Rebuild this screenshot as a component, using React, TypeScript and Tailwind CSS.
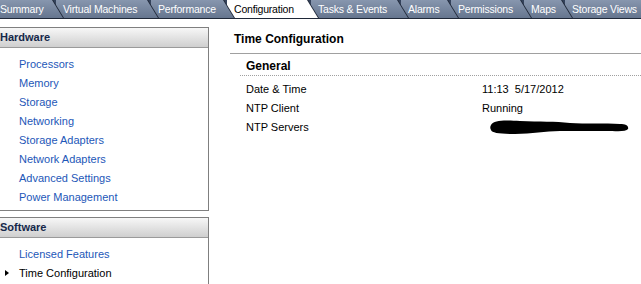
import React from "react";

const tabs = [
  { label: "Summary", w: "w-[71px]" },
  { label: "Virtual Machines", w: "w-[103px]" },
  { label: "Performance", w: "w-[84px]" },
  { label: "Configuration", w: "w-[92px]", active: true },
  { label: "Tasks & Events", w: "w-[98px]" },
  { label: "Alarms", w: "w-[58px]" },
  { label: "Permissions", w: "w-[81px]" },
  { label: "Maps", w: "w-[49px]" },
  { label: "Storage Views", w: "w-[90px]" },
];

const hardware = [
  "Processors",
  "Memory",
  "Storage",
  "Networking",
  "Storage Adapters",
  "Network Adapters",
  "Advanced Settings",
  "Power Management",
];

function Tab({ label, w, active }: { label: string; w: string; active?: boolean }) {
  return (
    <div
      className={`${w} relative -mr-[8px] h-[18px] shrink-0 bg-[#1f2838] [clip-path:polygon(0_0,calc(100%-11px)_0,100%_100%,0_100%)]`}
    >
      <div
        className={`flex h-full items-center pl-[7px] tracking-[-0.2px] [clip-path:polygon(0_0,calc(100%-12px)_0,calc(100%-1px)_100%,0_100%)] ${
          active
            ? "h-[19px] bg-white text-black"
            : "bg-gradient-to-b from-[#8796ae] to-[#66768f] text-white"
        }`}
      >
        {label}
      </div>
    </div>
  );
}

function Section({ title, children }: { title: string; children: React.ReactNode }) {
  return (
    <div className="w-[209px] border-y border-r border-[#7f7f7f] bg-white">
      <div className="flex h-[20px] items-center border-b border-[#9a9a9a] bg-gradient-to-b from-[#f7f7f7] to-[#cfcfcf] font-bold text-[#15284a]">
        {title}
      </div>
      <div className="flex flex-col pt-[7px] pb-[3px]">{children}</div>
    </div>
  );
}

function Link({ children }: { children: React.ReactNode }) {
  return <div className="flex h-[19px] items-center pl-[19px] text-[#1d57b8]">{children}</div>;
}

export default function App() {
  return (
    <div className="h-[284px] w-[641px] overflow-hidden bg-white text-[11px] font-['Liberation_Sans',Tahoma,sans-serif] leading-none">
      <div className="flex h-[19px] items-end border-b border-[#1f2838] bg-gradient-to-b from-[#33415a] to-[#4d5d78] -ml-[7px] text-[10.5px]">
        {tabs.map((t, i) => (
          <div key={t.label} className="flex" style={{ zIndex: 20 - i }}>
            <Tab {...t} />
          </div>
        ))}
      </div>
      <div className="flex">
        <div className="flex flex-col gap-[6px] pt-[8px]">
          <Section title="Hardware">
            {hardware.map((h) => (
              <Link key={h}>{h}</Link>
            ))}
          </Section>
          <Section title="Software">
            <Link>Licensed Features</Link>
            <div className="relative flex h-[19px] items-center pl-[19px] text-black">
              <span className="absolute left-[5px] top-[6px] h-0 w-0 border-y-[3px] border-l-[4px] border-y-transparent border-l-black" />
              Time Configuration
            </div>
          </Section>
        </div>
        <div className="flex-1 pl-[21px] pt-[14px]">
          <div className="border-b border-[#a0a0a0] pb-[8px] pl-[4px] text-[12px] font-bold text-black">
            Time Configuration
          </div>
          <div className="ml-[10px] mt-[6px] border-b border-dotted border-[#a0a0a0] pb-[3px] pl-[6px] text-[12px] font-bold text-black">
            General
          </div>
          <div className="ml-[16px] mt-[4px] flex flex-col text-black">
            <div className="flex h-[19px] items-center">
              <span className="w-[236px]">Date &amp; Time</span>
              <span>11:13&nbsp; 5/17/2012</span>
            </div>
            <div className="flex h-[19px] items-center">
              <span className="w-[236px]">NTP Client</span>
              <span>Running</span>
            </div>
            <div className="relative flex h-[19px] items-center">
              <span className="w-[244px]">NTP Servers</span>
              <svg width="140" height="16" viewBox="0 0 140 16" className="-mt-[2px]">
                <path
                  d="M1 6 C4 1 14 1 30 2 C50 3 65 2 80 4 C95 5 115 4 130 5 C136 5 139 7 138 10 C136 13 128 12 115 12 C100 12 85 12 70 12 C55 12 42 15 25 15 C10 15 2 14 1 11 C0 9 0 8 1 6 Z"
                  fill="#000"
                />
              </svg>
            </div>
          </div>
        </div>
      </div>
    </div>
  );
}
